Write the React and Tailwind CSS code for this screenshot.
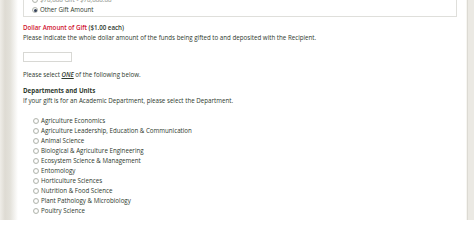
const DEPARTMENTS = [
  "Agriculture Economics",
  "Agriculture Leadership, Education & Communication",
  "Animal Science",
  "Biological & Agriculture Engineering",
  "Ecosystem Science & Management",
  "Entomology",
  "Horticulture Sciences",
  "Nutrition & Food Science",
  "Plant Pathology & Microbiology",
  "Poultry Science",
];

function Radio({ checked = false }) {
  return (
    <span className="flex h-[6px] w-[6px] shrink-0 items-center justify-center rounded-full border border-[#b3b7b0] bg-[radial-gradient(circle,#ffffff_30%,#e6e7e2_100%)]">
      {checked && <span className="h-[3px] w-[3px] rounded-full bg-[#34405a]" />}
    </span>
  );
}

export default function App() {
  return (
    <div className="flex h-[220px] w-[474px] overflow-hidden bg-white font-['Open_Sans',sans-serif] text-[6.2px] text-[#2e392d]">
      <div className="w-[18px] shrink-0 bg-[linear-gradient(to_right,#efede8_0px,#dedbd3_5px,#e3e1da_10px,#ffffff_18px)]" />

      <div className="flex-1 pl-[5px]">
        <div className="mt-[-12px] mr-[9px] border border-[#dfdfdb] pt-[6px] pb-[1px] pl-[8px]">
          <div className="flex h-[10px] items-center gap-[2px] leading-[10px] text-[#8a9088]">
            <Radio />
            <span>$78,888 Gift - $78,888.88</span>
          </div>
          <div className="flex h-[10px] items-center gap-[2px] leading-[10px]">
            <Radio checked />
            <span>Other Gift Amount</span>
          </div>
        </div>

        <p className="mt-[6px] h-[10px] leading-[10px] font-semibold">
          <span className="text-[#d0142f]">Dollar Amount of Gift</span> ($1.00 each)
        </p>
        <p className="h-[10px] leading-[10px]">
          Please indicate the whole dollar amount of the funds being gifted to and deposited with the Recipient.
        </p>

        <div className="mt-[9px] h-[10px] w-[49px] border border-[#d8d8d4] bg-white" />

        <p className="mt-[8px] h-[10px] leading-[10px]">
          Please select <span className="font-semibold underline italic">ONE</span> of the following below.
        </p>

        <p className="mt-[6px] h-[10px] leading-[10px] font-bold">Departments and Units</p>
        <p className="h-[10px] leading-[10px]">
          If your gift is for an Academic Department, please select the Department.
        </p>

        <ul className="mt-[10px] pl-[10px]">
          {DEPARTMENTS.map((name) => (
            <li key={name} className="flex h-[10px] items-center gap-[2px] leading-[10px]">
              <Radio />
              <span>{name}</span>
            </li>
          ))}
        </ul>
      </div>

      <div className="flex w-[8px] shrink-0">
        <div className="w-[1px] bg-[#f7f6f2]" />
        <div className="w-[1px] bg-[#dcdad3]" />
        <div className="flex-1 bg-[#ebe9e3]" />
      </div>
    </div>
  );
}
